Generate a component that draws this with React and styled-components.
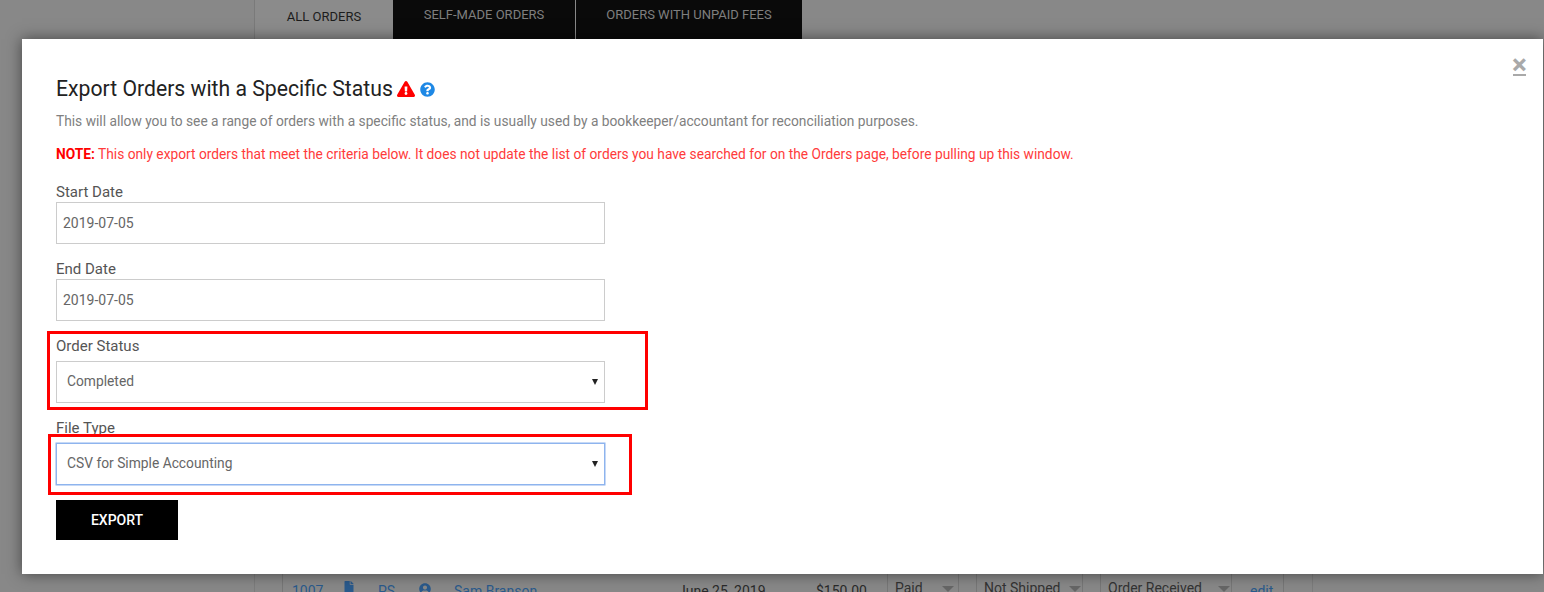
import React from "react";
import styled, { createGlobalStyle } from "styled-components";
import { FaExclamationTriangle, FaQuestionCircle, FaFile, FaUserCircle } from "react-icons/fa";

const Global = createGlobalStyle`
  html, body { margin: 0; padding: 0; height: 592px; overflow: hidden; background: #888; }
  * { box-sizing: border-box; }
  body { font-family: Roboto, "Liberation Sans", sans-serif; }
`;

const Page = styled.div`
  position: relative;
  width: 1544px;
  height: 592px;
  overflow: hidden;
  background: #888;
  display: flex;
  flex-direction: column;
  padding-left: 254px;
`;

const Tabs = styled.div`
  display: flex;
  height: 39px;
`;

const Tab = styled.div`
  height: 39px;
  width: ${(p) => p.$w}px;
  margin-right: ${(p) => p.$mr || 0}px;
  display: flex;
  justify-content: center;
  align-items: center;
  padding-bottom: ${(p) => (p.$active ? 7 : 10)}px;
  font-size: 13px;
  font-weight: 400;
  color: ${(p) => (p.$active ? "#1c1c1c" : "#7f7f7f")};
  background: ${(p) => (p.$active ? "#8b8b8b" : "#0a0a0a")};
  border-left: ${(p) => (p.$active ? "1px solid #7a7a7a" : "none")};
`;

const Table = styled.div`
  margin-top: 535px;
  width: 1059px;
  height: 18px;
  border-left: 1px solid #7c7c7c;
  border-right: 1px solid #7c7c7c;
  padding-left: 27px;
  display: flex;
`;

const Cell = styled.div`
  width: ${(p) => p.$w}px;
  flex: none;
  height: 18px;
  overflow: hidden;
  display: flex;
  align-items: flex-start;
  gap: ${(p) => p.$gap || 0}px;
  padding-left: ${(p) => p.$pl || 0}px;
  padding-top: ${(p) => p.$pt ?? 9}px;
  font-size: 14px;
  line-height: 16px;
  white-space: nowrap;
  color: ${(p) => p.$color || "#2a2a2a"};
  border-left: ${(p) => (p.$line ? "1px solid #777" : "none")};
  svg { flex: none; }
`;

const Caret = styled.span`
  flex: none;
  width: 0;
  height: 0;
  margin-top: 6px;
  border-left: 6px solid transparent;
  border-right: 6px solid transparent;
  border-top: 6px solid #666;
`;

const Modal = styled.div`
  position: absolute;
  left: 22px;
  top: 39px;
  width: 1521px;
  height: 535px;
  background: #fff;
  padding: 36px 34px 0;
  box-shadow: 0 0 14px rgba(0, 0, 0, 0.5);
`;

const Close = styled.div`
  position: absolute;
  left: 1491px;
  top: 17px;
  width: 13px;
  height: 20px;
  display: flex;
  justify-content: center;
  color: #a9a9a9;
  font-size: 28px;
  font-weight: 700;
  line-height: 17px;
  border-bottom: 2px solid #a9a9a9;
`;

const Title = styled.h2`
  margin: 0;
  height: 28px;
  display: flex;
  align-items: center;
  gap: 4px;
  font-size: 21.2px;
  font-weight: 400;
  line-height: 28px;
  color: #222;
  svg { flex: none; }
  svg:last-child { margin-left: 1px; }
`;

const Intro = styled.p`
  margin: 8px 0 0;
  font-size: 13.75px;
  font-weight: 400;
  line-height: 20px;
  color: #808080;
`;

const Note = styled.p`
  margin: 13px 0 0;
  font-size: 13.75px;
  font-weight: 400;
  line-height: 20px;
  color: #ff3b3b;
  b { font-weight: 700; color: #f00; }
`;

const Form = styled.form`
  margin-top: 18px;
  display: flex;
  flex-direction: column;
  align-items: flex-start;
`;

const Field = styled.div`
  position: relative;
  width: 549px;
  margin-top: ${(p) => p.$mt || 0}px;
`;

const Label = styled.label`
  display: block;
  height: ${(p) => p.$h}px;
  font-size: 15px;
  line-height: 20px;
  color: #555;
`;

const Input = styled.input`
  display: block;
  width: 549px;
  height: 42px;
  padding: 0 6px;
  border: 1px solid #ccc;
  background: #fff;
  font-family: inherit;
  font-size: 14px;
  line-height: 38px;
  color: #666;
  outline: none;
`;

const SelectWrap = styled.div`
  position: relative;
  width: 549px;
  height: 42px;
`;

const Select = styled.select`
  display: block;
  appearance: none;
  width: 549px;
  height: 42px;
  padding: 0 10px 2px;
  border: 1px solid ${(p) => (p.$focus ? "#8eb4ee" : "#ccc")};
  box-shadow: ${(p) => (p.$focus ? "0 0 0 0.5px #8eb4ee" : "none")};
  border-radius: 0;
  background: #fff;
  font-family: inherit;
  font-size: 13.8px;
  color: #666;
  outline: none;
`;

const Arrow = styled.span`
  position: absolute;
  left: 536px;
  top: 18px;
  width: 0;
  height: 0;
  border-left: 3px solid transparent;
  border-right: 3px solid transparent;
  border-top: 6px solid #222;
  pointer-events: none;
`;

const Highlight = styled.div`
  position: absolute;
  left: ${(p) => p.$l}px;
  top: ${(p) => p.$t}px;
  width: ${(p) => p.$w}px;
  height: ${(p) => p.$h}px;
  border: 3px solid #f00;
  pointer-events: none;
`;

const ExportButton = styled.button`
  margin-top: 15px;
  width: 122px;
  height: 40px;
  border: none;
  background: #000;
  color: #fff;
  font-family: inherit;
  font-size: 14px;
  font-weight: 500;
  padding-bottom: 2px;
  cursor: pointer;
`;

const Blue = "#2a5a8c";

export default function App() {
  return (
    <Page>
      <Global />
      <Tabs>
        <Tab $active $w={139}>ALL ORDERS</Tab>
        <Tab $w={182} $mr={1}>SELF-MADE ORDERS</Tab>
        <Tab $w={226}>ORDERS WITH UNPAID FEES</Tab>
      </Tabs>
      <Table>
        <Cell $w={61} $line $pl={9} $color={Blue}>1007</Cell>
        <Cell $w={35} $color={Blue} $pt={7}><FaFile size={12} /></Cell>
        <Cell $w={41} $color={Blue}>PS</Cell>
        <Cell $w={35} $color={Blue} $pt={9}><FaUserCircle size={12} /></Cell>
        <Cell $w={224} $color={Blue}>Sam Branson</Cell>
        <Cell $w={138}>June 25, 2019</Cell>
        <Cell $w={71}>$150.00</Cell>
        <Cell $w={71} $line $pl={7} $pt={6} $gap={19} $color="#333">Paid<Caret /></Cell>
        <Cell $w={18} $line />
        <Cell $w={106} $line $pl={7} $pt={6} $gap={8} $color="#333">Not Shipped<Caret /></Cell>
        <Cell $w={18} $line />
        <Cell $w={131} $line $pl={7} $pt={6} $gap={16} $color="#333">Order Received<Caret /></Cell>
        <Cell $w={52} $line $pl={18} $color={Blue}>edit</Cell>
        <Cell $w={29} $line />
      </Table>
      <Modal>
        <Close>×</Close>
        <Title>
          Export Orders with a Specific Status
          <FaExclamationTriangle size={18} color="#f00" />
          <FaQuestionCircle size={15} color="#1e88e5" />
        </Title>
        <Intro>This will allow you to see a range of orders with a specific status, and is usually used by a bookkeeper/accountant for reconciliation purposes.</Intro>
        <Note><b>NOTE:</b> This only export orders that meet the criteria below. It does not update the list of orders you have searched for on the Orders page, before pulling up this window.</Note>
        <Form onSubmit={(e) => e.preventDefault()}>
          <Field>
            <Label $h={20}>Start Date</Label>
            <Input readOnly value="2019-07-05" />
          </Field>
          <Field $mt={15}>
            <Label $h={20}>End Date</Label>
            <Input readOnly value="2019-07-05" />
          </Field>
          <Field $mt={15}>
            <Highlight $l={-9} $t={-5} $w={601} $h={79} />
            <Label $h={25}>Order Status</Label>
            <SelectWrap>
              <Select defaultValue="Completed"><option>Completed</option></Select>
              <Arrow />
            </SelectWrap>
          </Field>
          <Field $mt={15}>
            <Highlight $l={-8} $t={16} $w={584} $h={61} />
            <Label $h={25}>File Type</Label>
            <SelectWrap>
              <Select $focus defaultValue="CSV for Simple Accounting"><option>CSV for Simple Accounting</option></Select>
              <Arrow />
            </SelectWrap>
          </Field>
          <ExportButton type="button">EXPORT</ExportButton>
        </Form>
      </Modal>
    </Page>
  );
}
